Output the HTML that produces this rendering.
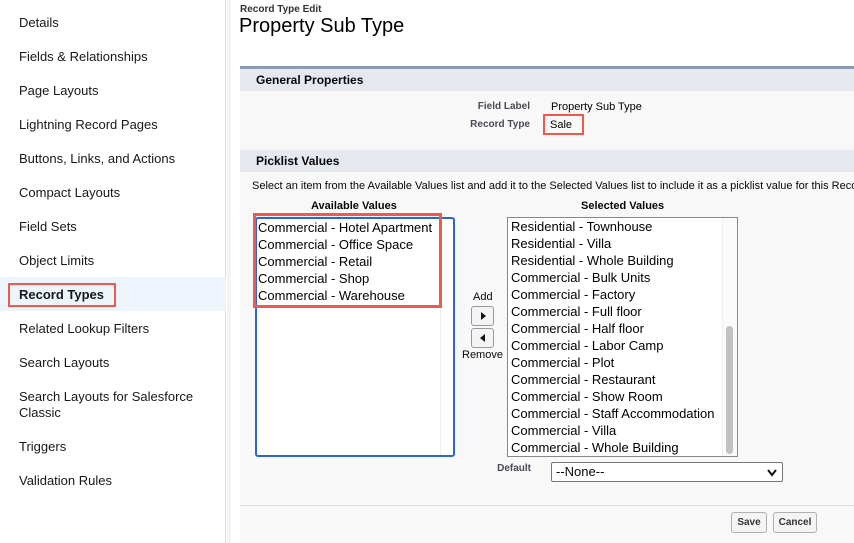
<!DOCTYPE html>
<html><head><style>
*{margin:0;padding:0;box-sizing:border-box}
body{width:854px;height:543px;overflow:hidden;background:#fff;font-family:"Liberation Sans",Arial,sans-serif;position:relative;color:#080707}
.side{position:absolute;left:0;top:0;width:226px;height:543px;border-right:1px solid #dddbda;background:#fff}
.side div{position:absolute;left:19px;font-size:13px;color:#181818}
.sel{position:absolute;left:0;top:277px;width:226px;height:34px;background:#eef4fc}
.gap{position:absolute;left:227px;top:0;width:4px;height:543px;background:#f3f3f3}
.a{position:absolute}
.lbl{font-size:10px;font-weight:bold;color:#4a4a56;text-align:right}
.v{font-size:11px;color:#000}
.list{position:absolute;font-size:13px;line-height:17px;color:#000;background:#fff}
</style></head><body>
<div class="side">
<div class="sel" style="left:0"></div>
<div style="top:15px">Details</div>
<div style="top:49px">Fields &amp; Relationships</div>
<div style="top:83px">Page Layouts</div>
<div style="top:117px">Lightning Record Pages</div>
<div style="top:151px">Buttons, Links, and Actions</div>
<div style="top:185px">Compact Layouts</div>
<div style="top:219px">Field Sets</div>
<div style="top:253px">Object Limits</div>
<div style="top:287px;font-weight:bold">Record Types</div>
<div style="top:321px">Related Lookup Filters</div>
<div style="top:355px">Search Layouts</div>
<div style="top:389px;line-height:16px">Search Layouts for Salesforce<br>Classic</div>
<div style="top:439px">Triggers</div>
<div style="top:473px">Validation Rules</div>
</div>
<div class="a" style="left:8px;top:283px;width:108px;height:24px;border:2px solid #ef5a4f"></div>
<div class="gap"></div>
<div class="a" style="left:240px;top:4px;font-size:10px;font-weight:bold;color:#333">Record Type Edit</div>
<div class="a" style="left:239px;top:15px;font-size:20px;color:#000">Property Sub Type</div>
<div class="a" style="left:240px;top:66px;width:614px;height:477px;background:#f8f8f8;border-top:3px solid #8a9ab0"></div>
<div class="a" style="left:240px;top:69px;width:614px;height:22px;background:#e5e8ef"></div>
<div class="a" style="left:256px;top:73px;font-size:12px;font-weight:bold">General Properties</div>
<div class="a lbl" style="left:430px;top:101px;width:100px">Field Label</div>
<div class="a v" style="left:551px;top:101px">Property Sub Type</div>
<div class="a lbl" style="left:430px;top:119px;width:100px">Record Type</div>
<div class="a v" style="left:550px;top:119px">Sale</div>
<div class="a" style="left:543px;top:114px;width:41px;height:21px;border:2px solid #ef5a4f"></div>
<div class="a" style="left:240px;top:150px;width:614px;height:22px;background:#e5e8ef"></div>
<div class="a" style="left:256px;top:154px;font-size:12px;font-weight:bold">Picklist Values</div>
<div class="a" style="left:252px;top:180px;width:602px;overflow:hidden;font-size:11px;white-space:nowrap">Select an item from the Available Values list and add it to the Selected Values list to include it as a picklist value for this Record Type.</div>
<div class="a" style="left:311px;top:200px;font-size:11px;font-weight:bold">Available Values</div>
<div class="a" style="left:581px;top:200px;font-size:11px;font-weight:bold">Selected Values</div>
<div class="list" style="left:255px;top:217px;width:200px;height:240px;border:2px solid #2e64d6;border-radius:3px;padding-left:1px">
<div style="position:absolute;right:12px;top:0;width:1px;height:236px;background:#eee"></div>
Commercial - Hotel Apartment<br>Commercial - Office Space<br>Commercial - Retail<br>Commercial - Shop<br>Commercial - Warehouse</div>
<div class="a" style="left:253px;top:213px;width:189px;height:95px;border:3px solid #ef5a4f"></div>
<div class="a" style="left:473px;top:291px;font-size:11px">Add</div>
<div class="a" style="left:471px;top:306px;width:23px;height:20px;border:1px solid #999;border-radius:3px;background:#f4f4f4"><svg width="21" height="18" style="position:absolute;left:0;top:0"><path d="M9 5 L14 9 L9 13 Z" fill="#111"/></svg></div>
<div class="a" style="left:471px;top:328px;width:23px;height:20px;border:1px solid #999;border-radius:3px;background:#f4f4f4"><svg width="21" height="18" style="position:absolute;left:0;top:0"><path d="M13 5 L8 9 L13 13 Z" fill="#111"/></svg></div>
<div class="a" style="left:462px;top:349px;font-size:11px">Remove</div>
<div class="list" style="left:507px;top:217px;width:231px;height:240px;border:1px solid #888;padding-left:3px;overflow:hidden">
<div style="position:absolute;right:0;top:0;width:15px;height:238px;background:#fafafa;border-left:1px solid #eee"></div>
<div style="position:absolute;right:4px;top:108px;width:7px;height:128px;background:#c1c1c1;border-radius:4px"></div>
Residential - Townhouse<br>Residential - Villa<br>Residential - Whole Building<br>Commercial - Bulk Units<br>Commercial - Factory<br>Commercial - Full floor<br>Commercial - Half floor<br>Commercial - Labor Camp<br>Commercial - Plot<br>Commercial - Restaurant<br>Commercial - Show Room<br>Commercial - Staff Accommodation<br>Commercial - Villa<br>Commercial - Whole Building</div>
<div class="a lbl" style="left:480px;top:463px;width:51px">Default</div>
<div class="a" style="left:551px;top:462px;width:232px;height:20px;border:1px solid #777;border-radius:2px;background:#fff;font-size:13px;padding-left:4px;line-height:18px">--None--<svg width="12" height="10" style="position:absolute;right:4px;top:5px"><path d="M2 2 L6 7 L10 2" fill="none" stroke="#111" stroke-width="2"/></svg></div>
<div class="a" style="left:240px;top:505px;width:614px;height:1px;background:#dcdcdc"></div>
<div class="a" style="left:731px;top:512px;width:36px;height:21px;border:1px solid #b0b0b0;border-radius:3px;background:#f4f4f4;font-size:10px;font-weight:bold;text-align:center;line-height:19px;color:#333">Save</div>
<div class="a" style="left:773px;top:512px;width:44px;height:21px;border:1px solid #b0b0b0;border-radius:3px;background:#f4f4f4;font-size:10px;font-weight:bold;text-align:center;line-height:19px;color:#333">Cancel</div>
</body></html>
